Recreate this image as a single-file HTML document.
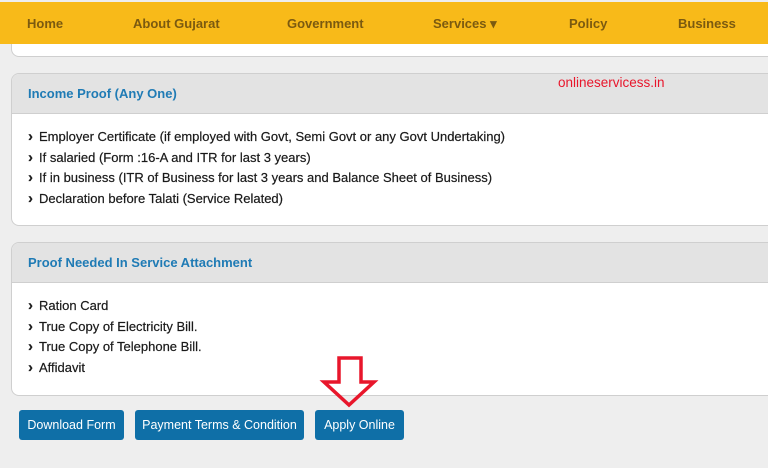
<!DOCTYPE html>
<html><head><meta charset="utf-8"><style>
body{margin:0;width:768px;height:468px;background:#eeeeee;font-family:"Liberation Sans",Arial,sans-serif;position:relative;overflow:hidden}
.nav{position:absolute;left:0;top:2px;width:768px;height:42px;background:#f8ba19;z-index:2}
.nav span{position:absolute;top:14px;font-size:13px;font-weight:bold;color:#7b5a10}
.box{position:absolute;left:11px;width:780px;background:#fff;border:1px solid #cfcfcf;border-radius:8px;overflow:hidden}
.hd{background:#e3e3e3;height:39px;border-bottom:1px solid #cfcfcf;color:#1f7bb5;font-weight:bold;font-size:13px;line-height:40px;padding-left:16px}
ul{list-style:none;margin:0;padding:14px 0 0 16px}
li{font-size:13px;color:#1a1a1a;height:20.5px;-webkit-text-stroke:0.2px #1a1a1a}
li:before{content:"›";font-weight:bold;font-size:15px;margin-right:6px}
.btn{position:absolute;top:410px;height:30px;background:#0f6fa7;color:#fff;font-size:12.5px;line-height:31px;text-align:center;border-radius:3px}
</style></head><body>
<div class="nav">
<span style="left:27px">Home</span><span style="left:133px">About Gujarat</span><span style="left:287px">Government</span><span style="left:433px">Services ▾</span><span style="left:569px">Policy</span><span style="left:678px">Business</span>
</div>
<div class="box" style="top:30px;height:25px;border-radius:0 0 8px 8px"></div>
<div class="box" style="top:73px;height:151px">
<div class="hd">Income Proof (Any One)</div>
<ul><li>Employer Certificate (if employed with Govt, Semi Govt or any Govt Undertaking)</li><li>If salaried (Form :16-A and ITR for last 3 years)</li><li>If in business (ITR of Business for last 3 years and Balance Sheet of Business)</li><li>Declaration before Talati (Service Related)</li></ul>
</div>
<div style="position:absolute;left:558px;top:75px;color:#e8162b;font-size:13.5px">onlineservicess.in</div>
<div class="box" style="top:242px;height:152px">
<div class="hd">Proof Needed In Service Attachment</div>
<ul><li>Ration Card</li><li>True Copy of Electricity Bill.</li><li>True Copy of Telephone Bill.</li><li>Affidavit</li></ul>
</div>
<div class="btn" style="left:19px;width:105px">Download Form</div>
<div class="btn" style="left:135px;width:169px">Payment Terms &amp; Condition</div>
<div class="btn" style="left:315px;width:89px">Apply Online</div>
<svg style="position:absolute;left:0;top:0" width="768" height="468"><path d="M339 358H361V382H374L349 405L324 382H339Z" fill="none" stroke="#e8162b" stroke-width="3.5" stroke-linejoin="miter"/></svg>
</body></html>
